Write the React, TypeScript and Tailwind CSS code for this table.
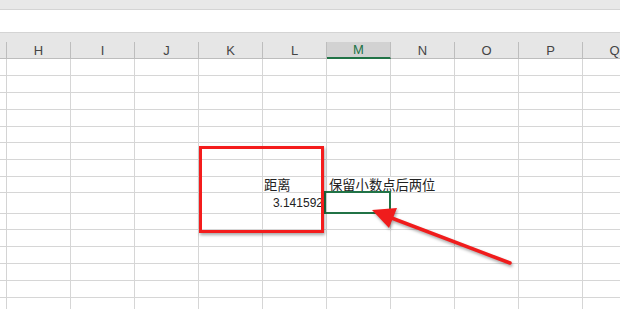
import React from 'react';

const COLS = ['H', 'I', 'J', 'K', 'L', 'M', 'N', 'O', 'P', 'Q'];
const ROW_HEIGHTS = [17, 17, 17, 17, 16, 17, 17, 16, 21, 16, 17, 17, 17, 17, 17];

const cjk = { fontFamily: '"Noto Sans CJK SC", "Microsoft YaHei", sans-serif' };

function cellContent(row: number, col: string) {
  if (row === 7 && col === 'L') {
    return (
      <span className="text-[13.3px] leading-none text-[#222] pl-[1px] pb-[1px] whitespace-nowrap" style={cjk}>
        距离
      </span>
    );
  }
  if (row === 7 && col === 'M') {
    return (
      <span className="text-[13.3px] leading-none text-[#222] pl-[2px] pb-[1px] whitespace-nowrap" style={cjk}>
        保留小数点后两位
      </span>
    );
  }
  if (row === 8 && col === 'L') {
    return (
      <span className="ml-auto text-[12px] leading-none text-[#222] pr-[3px] pb-[4px] font-['Liberation_Sans',sans-serif]">
        3.141592
      </span>
    );
  }
  return null;
}

export default function App() {
  return (
    <div className="relative w-[620px] h-[309px] overflow-hidden bg-white font-['Liberation_Sans',sans-serif]">
      {/* ribbon edge */}
      <div className="h-[10px] bg-[#e8e8e8] border-b border-[#d4d4d4]" />
      {/* formula bar */}
      <div className="h-[23px] bg-white border-b border-[#d4d4d4]" />
      <div className="h-[9px] bg-[#e6e6e6]" />

      <div className="grid grid-cols-[7px_repeat(10,64px)] w-[647px]">
        {/* column headers */}
        <div className="h-[17px] bg-[#e6e6e6] border-r border-b border-[#bdbdbd]" />
        {COLS.map((c) =>
          c === 'M' ? (
            <div
              key={c}
              className="h-[17px] bg-[#d2d2d2] border-r border-[#bdbdbd] border-b-2 border-b-[#217346] flex items-center justify-center text-[13px] leading-none text-[#217346]"
            >
              {c}
            </div>
          ) : (
            <div
              key={c}
              className="h-[17px] bg-[#e6e6e6] border-r border-b border-[#bdbdbd] flex items-center justify-center text-[13px] leading-none text-[#444]"
            >
              {c}
            </div>
          )
        )}

        {/* body rows */}
        {ROW_HEIGHTS.map((h, r) => (
          <React.Fragment key={r}>
            <div className="border-r border-b border-[#d4d4d4]" style={{ height: h }} />
            {COLS.map((c) => (
              <div
                key={c}
                className={`flex items-end border-b border-[#d6d6d6] ${
                  r === 7 && c === 'M' ? 'border-r border-r-transparent' : 'border-r'
                }`}
                style={{ height: h }}
              >
                {cellContent(r, c)}
              </div>
            ))}
          </React.Fragment>
        ))}
      </div>

      {/* active cell */}
      <div className="absolute left-[324px] top-[191px] w-[67px] h-[23px] border-2 border-[#217346]" />

      {/* red highlight box */}
      <div className="absolute left-[199px] top-[146px] w-[125px] h-[87px] border-[3px] border-[#f41c1c] shadow-[1px_2px_3px_rgba(0,0,0,0.35)]" />

      {/* arrow */}
      <svg
        className="absolute inset-0 w-[620px] h-[309px] pointer-events-none drop-shadow-[1px_2px_1.5px_rgba(0,0,0,0.35)]"
        viewBox="0 0 620 309"
      >
        <line x1="510" y1="263" x2="389" y2="217" stroke="#f01c1c" strokeWidth="3.5" strokeLinecap="round" />
        <polygon points="372,210 397,208 389,228" fill="#f01c1c" />
      </svg>
    </div>
  );
}
